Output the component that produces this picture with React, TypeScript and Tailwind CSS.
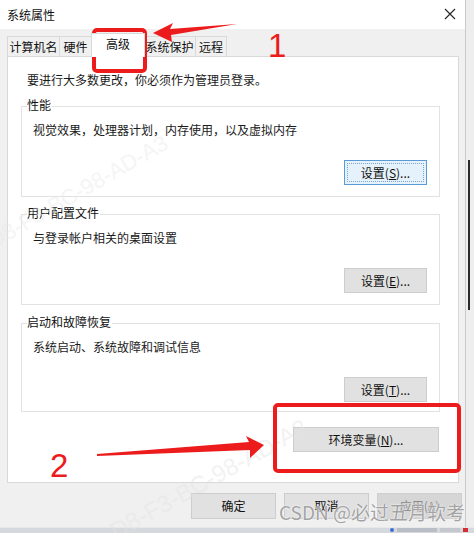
import React from "react";

const ui = "font-['Microsoft_YaHei_UI','Noto_Sans_CJK_SC',sans-serif]";

type BtnProps = {
  label: React.ReactNode;
  className?: string;
  variant?: "normal" | "focused" | "disabled";
};

function DlgButton({ label, className = "", variant = "normal" }: BtnProps) {
  const look =
    variant === "focused"
      ? "bg-[#e5f1fb] border-[#5a9bd5] text-[#111]"
      : variant === "disabled"
      ? "bg-[#d6d6d6] border-[#cfcfcf] text-[#8a8a8a]"
      : "bg-[#e1e1e1] border-[#cdcdcd] text-[#111]";
  return (
    <div
      className={`relative flex items-center justify-center border text-[12px] leading-none ${look} ${className}`}
    >
      {variant === "focused" && (
        <div className="absolute inset-[2px] border border-dotted border-[#7aa6cf]" />
      )}
      <span className="relative">{label}</span>
    </div>
  );
}

function GroupBox({
  title,
  desc,
  button,
  h,
  className = "",
  focused = false,
}: {
  title: string;
  desc: string;
  button: React.ReactNode;
  h: string;
  className?: string;
  focused?: boolean;
}) {
  return (
    <div className={`relative ml-[13px] mr-[18px] flex flex-col border border-[#e2e2e2] ${h} ${className}`}>
      <span className="absolute left-[5px] top-[-10px] bg-white pr-[1px] text-[12px] leading-[16px] text-[#111]">
        {title}
      </span>
      <p className="pl-[11px] pt-[15px] text-[12px] leading-[16px] text-[#1a1a1a]">{desc}</p>
      <DlgButton
        label={button}
        variant={focused ? "focused" : "normal"}
        className="mr-[12px] mt-[22px] h-[25px] w-[83px] self-end"
      />
    </div>
  );
}

function Tab({ label, w, active = false }: { label: string; w: string; active?: boolean }) {
  return active ? (
    <div
      className={`relative z-10 -mb-px flex h-[24px] ${w} items-start justify-center border border-b-0 border-[#d9d9d9] bg-white pt-[2px] text-[12px] leading-[16px] text-[#111]`}
    >
      {label}
    </div>
  ) : (
    <div
      className={`flex h-[20px] ${w} items-center justify-center border border-b-0 border-l-0 border-[#d9d9d9] bg-[#f0f0f0] text-[12px] leading-[16px] text-[#111] first:border-l`}
    >
      {label}
    </div>
  );
}

export default function App() {
  return (
    <div className={`relative h-[533px] w-[474px] overflow-hidden bg-[#d5d9de] ${ui}`}>
      <div className="flex h-[527px]">
        {/* dialog window */}
        <div className="flex w-[465px] flex-col bg-[#f0f0f0]">
          <div className="flex h-[29px] items-center justify-between bg-white pl-[7px] pr-[9px]">
            <span className="text-[12px] leading-[16px] text-[#111]">系统属性</span>
            <svg width="12" height="12" viewBox="0 0 12 12" className="mb-[1px]">
              <path d="M1 1 L11 11 M11 1 L1 11" stroke="#222" strokeWidth="1.1" />
            </svg>
          </div>

          <div className="flex flex-1 flex-col px-[7px]">
            <div className="mt-[4px] flex h-[23px] items-end">
              <Tab label="计算机名" w="w-[53px]" />
              <Tab label="硬件" w="w-[32px]" />
              <Tab label="高级" w="w-[54px] -ml-[1px] -mr-[1px]" active />
              <Tab label="系统保护" w="w-[52px]" />
              <Tab label="远程" w="w-[31px]" />
            </div>

            <div className="flex h-[427px] w-[452px] flex-col border border-[#d9d9d9] bg-white">
              <p className="pl-[19px] pt-[15px] text-[12px] leading-[16px] text-[#1a1a1a]">
                要进行大多数更改，你必须作为管理员登录。
              </p>

              <GroupBox
                className="mt-[18px]"
                h="h-[91px]"
                title="性能"
                desc="视觉效果，处理器计划，内存使用，以及虚拟内存"
                button={<>设置(<u>S</u>)...</>}
                focused
              />
              <GroupBox
                className="mt-[17px]"
                h="h-[91px]"
                title="用户配置文件"
                desc="与登录帐户相关的桌面设置"
                button={<>设置(<u>E</u>)...</>}
              />
              <GroupBox
                className="mt-[18px]"
                h="h-[89px]"
                title="启动和故障恢复"
                desc="系统启动、系统故障和调试信息"
                button={<>设置(<u>T</u>)...</>}
              />

              <DlgButton
                label={<>环境变量(<u>N</u>)...</>}
                className="mr-[19px] mt-[15px] h-[25px] w-[146px] self-end"
              />
            </div>

            <div className="-mr-[4px] mt-[10px] flex justify-end gap-[8px]">
              <DlgButton label="确定" className="h-[26px] w-[85px]" />
              <DlgButton label="取消" className="h-[26px] w-[85px]" />
              <DlgButton label={<>应用(<u>A</u>)</>} variant="disabled" className="h-[26px] w-[85px]" />
            </div>
          </div>
        </div>

        {/* desktop edge beside the window */}
        <div className="flex w-[9px] border-l border-[#c9c9c9] bg-[#eeeeee]">
          <div className="ml-[2px] mt-[160px] h-[150px] w-[2px] bg-[#2a2a2a]" />
        </div>
      </div>

      {/* taskbar sliver */}
      <div className="flex h-[6px] items-start justify-end gap-[3px] border-t border-[#e8e8e8] pr-[6px]">
        <div className="h-[4px] w-[4px] rounded-full bg-[#3b6fd8]" />
        <div className="h-[4px] w-[40px] bg-[#b9bec6]" />
        <div className="h-[4px] w-[20px] bg-[#c4c8ce]" />
        <div className="h-[4px] w-[5px] bg-[#d23030]" />
      </div>

      {/* faint diagonal marks */}
      <span className="pointer-events-none absolute left-[-10px] top-[226px] origin-left -rotate-[30deg] whitespace-nowrap font-['Liberation_Sans',sans-serif] text-[22px] text-[#e9e9e9] opacity-45">
        D8-F3-BC-98-AD-A3
      </span>
      <span className="pointer-events-none absolute left-[112px] top-[515px] origin-left -rotate-[29deg] whitespace-nowrap font-['Liberation_Sans',sans-serif] text-[24px] text-[#e4e4e4] opacity-45">
        D8-F3-BC-98-AD-A3
      </span>

      {/* red markup */}
      <svg className="pointer-events-none absolute left-0 top-0" width="474" height="533" viewBox="0 0 474 533">
        <rect x="94" y="30" width="51" height="41" rx="3" fill="none" stroke="#ec1c1c" strokeWidth="4" />
        <polygon points="153,33 173,23 170,29 237,24 171,35 172,42" fill="#ec1c1c" />
        <rect x="275" y="405" width="184" height="66" rx="3" fill="none" stroke="#ec1c1c" strokeWidth="4" />
        <polygon points="97,454 249,442 246,436 264,445 250,458 250,450 97,456" fill="#ec1c1c" />
      </svg>
      <span className="absolute left-[268px] top-[26px] font-['Liberation_Sans',sans-serif] text-[33px] leading-[40px] text-[#ec1c1c]">
        1
      </span>
      <span className="absolute left-[50px] top-[446px] font-['Liberation_Sans',sans-serif] text-[33px] leading-[40px] text-[#ec1c1c]">
        2
      </span>

      <span className="pointer-events-none absolute left-[279px] top-[499px] whitespace-nowrap text-[19px] leading-[26px] text-[#a3a3a3] [text-shadow:0_0_2px_#ffffff,0_0_1px_#ffffff]">
        CSDN @必过五月软考
      </span>
    </div>
  );
}
